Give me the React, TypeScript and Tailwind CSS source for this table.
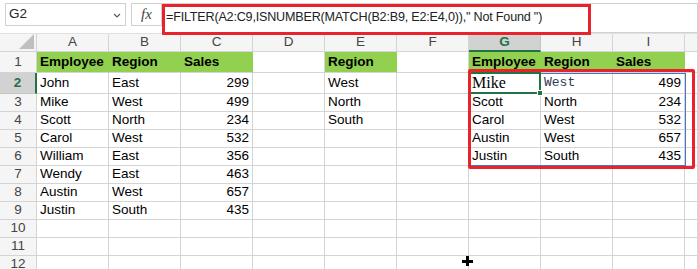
import React from 'react';

type Cell = {
    v?: string;
    right?: boolean;
    bold?: boolean;
    fill?: boolean;
    kind?: 'serif' | 'mono';
};

const COLS = ['A', 'B', 'C', 'D', 'E', 'F', 'G', 'H', 'I', ''];

const t = (v: string): Cell => ({ v });
const n = (v: string): Cell => ({ v, right: true });
const h = (v: string): Cell => ({ v, bold: true, fill: true });
const e: Cell = {};

const ROWS: { height: string; cells: Cell[] }[] = [
    { height: 'h-[21px]', cells: [h('Employee'), h('Region'), h('Sales'), e, h('Region'), e, h('Employee'), h('Region'), h('Sales'), e] },
    { height: 'h-[21px]', cells: [t('John'), t('East'), n('299'), e, t('West'), e, { v: 'Mike', kind: 'serif' }, { v: 'West', kind: 'mono' }, n('499'), e] },
    { height: 'h-[18px]', cells: [t('Mike'), t('West'), n('499'), e, t('North'), e, t('Scott'), t('North'), n('234'), e] },
    { height: 'h-[18px]', cells: [t('Scott'), t('North'), n('234'), e, t('South'), e, t('Carol'), t('West'), n('532'), e] },
    { height: 'h-[18px]', cells: [t('Carol'), t('West'), n('532'), e, e, e, t('Austin'), t('West'), n('657'), e] },
    { height: 'h-[18px]', cells: [t('William'), t('East'), n('356'), e, e, e, t('Justin'), t('South'), n('435'), e] },
    { height: 'h-[18px]', cells: [t('Wendy'), t('East'), n('463'), e, e, e, e, e, e, e] },
    { height: 'h-[18px]', cells: [t('Austin'), t('West'), n('657'), e, e, e, e, e, e, e] },
    { height: 'h-[18px]', cells: [t('Justin'), t('South'), n('435'), e, e, e, e, e, e, e] },
    { height: 'h-[18px]', cells: [e, e, e, e, e, e, e, e, e, e] },
    { height: 'h-[18px]', cells: [e, e, e, e, e, e, e, e, e, e] },
    { height: 'h-[18px]', cells: [e, e, e, e, e, e, e, e, e, e] },
];

const GridCell: React.FC<{ cell: Cell; last: boolean }> = ({ cell, last }) => {
    const width = last ? 'w-[13px]' : 'w-[72px]';
    const bg = cell.fill ? 'bg-[#92d050]' : 'bg-white';
    const rightLine = cell.fill ? 'border-r-[#92d050]' : 'border-r-[#d4d4d4]';
    let text = 'font-["Liberation_Sans",sans-serif] text-[13.5px]';
    if (cell.kind === 'serif') text = 'font-["Liberation_Serif",serif] text-[16px]';
    if (cell.kind === 'mono') text = 'font-["Liberation_Mono",monospace] text-[13px] text-[#2f3a55]';
    return (
        <div
            className={`${width} ${bg} shrink-0 h-full border-r border-b ${rightLine} border-b-[#d4d4d4] flex items-center px-[3px] overflow-hidden whitespace-nowrap ${cell.right ? 'justify-end' : ''} ${cell.bold ? 'font-bold' : ''} ${text}`}
        >
            {cell.v}
        </div>
    );
};

export default function App() {
    return (
        <div className="relative w-[698px] h-[269px] overflow-hidden bg-white text-black font-['Liberation_Sans',sans-serif]">
            {/* Formula bar */}
            <div className="flex items-start h-[34px] pt-[3px] bg-white border-b border-[#e1e1e1]">
                <div className="ml-[5px] w-[121px] h-[23px] border border-[#d0d0d0] flex items-center justify-between pl-[3px] pr-[4px] text-[13.5px] text-[#222]">
                    <span>G2</span>
                    <svg width="8" height="5" viewBox="0 0 8 5" className="mt-[1px]">
                        <path d="M1 1l3 3 3-3" fill="none" stroke="#555" strokeWidth="1.1" />
                    </svg>
                </div>
                <div className="ml-[5px] w-[31px] h-[23px] border border-[#d0d0d0] flex items-center justify-center font-['Liberation_Serif',serif] italic text-[15px] text-[#444]">
                    fx
                </div>
                <div className="flex-1 h-[30px] border border-[#d0d0d0] flex items-center pl-[3px] pb-[2px] text-[12.6px] tracking-[-0.2px] text-[#222] whitespace-nowrap">
                    =FILTER(A2:C9,ISNUMBER(MATCH(B2:B9, E2:E4,0)),&quot; Not Found &quot;)
                </div>
            </div>

            {/* Column headers */}
            <div className="flex h-[18px] bg-[#f5f5f5] text-[13.5px] text-[#444]">
                <div className="w-[37px] shrink-0 h-full border-r border-b border-[#d4d4d4] flex items-end justify-end pr-[2px] pb-[2px]">
                    <svg width="15" height="15" viewBox="0 0 15 15">
                        <path d="M15 0L15 15L0 15Z" fill="#bfbfbf" />
                    </svg>
                </div>
                {COLS.map((c, i) =>
                    c === 'G' ? (
                        <div key={i} className="w-[72px] shrink-0 h-full bg-[#d2d2d2] border-r border-[#c4c4c4] border-b-2 border-b-[#217346] flex items-center justify-center font-bold text-[#217346]">
                            {c}
                        </div>
                    ) : (
                        <div key={i} className={`${c ? 'w-[72px]' : 'w-[13px]'} shrink-0 h-full border-r border-b border-[#d4d4d4] flex items-center justify-center`}>
                            {c}
                        </div>
                    )
                )}
            </div>

            {/* Rows */}
            {ROWS.map((row, r) => (
                <div key={r} className={`flex ${row.height}`}>
                    {r === 1 ? (
                        <div className="w-[37px] shrink-0 h-full bg-[#d2d2d2] border-b border-b-[#c4c4c4] border-r-2 border-r-[#217346] flex items-center justify-center text-[13.5px] font-bold text-[#217346]">
                            {r + 1}
                        </div>
                    ) : (
                        <div className="w-[37px] shrink-0 h-full bg-[#f5f5f5] border-r border-b border-[#d4d4d4] flex items-center justify-center text-[13.5px] text-[#444]">
                            {r + 1}
                        </div>
                    )}
                    {row.cells.map((cell, i) => (
                        <GridCell key={i} cell={cell} last={i === row.cells.length - 1} />
                    ))}
                </div>
            ))}

            {/* Spill range outline */}
            <div className="absolute left-[470px] top-[73px] w-[216px] h-[93px] border border-[#4a72c9] pointer-events-none" />

            {/* Active cell G2 */}
            <div className="absolute left-[469px] top-[72px] w-[72px] h-[22px] border-2 border-[#217346] pointer-events-none" />
            <div className="absolute left-[537px] top-[90px] w-[6px] h-[6px] bg-[#217346] border border-white pointer-events-none" />

            {/* Red highlight boxes */}
            <div className="absolute left-[162px] top-[4px] w-[429px] h-[31px] border-[3px] border-[#e8232b] pointer-events-none" />
            <div className="absolute left-[468px] top-[69px] w-[227px] h-[100px] border-[3px] border-[#e8232b] rounded-[2px] pointer-events-none" />

            {/* Mouse cursor */}
            <div className="absolute left-[466px] top-[256px] w-[3px] h-[10px] bg-black" />
            <div className="absolute left-[462px] top-[260px] w-[11px] h-[3px] bg-black" />
        </div>
    );
}
